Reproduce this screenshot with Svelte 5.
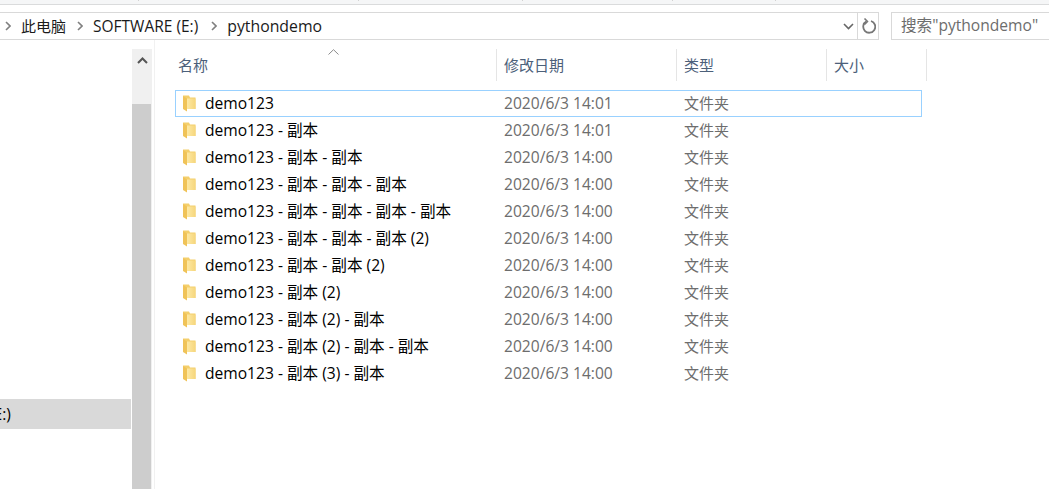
<script>
  const columns = [
    { label: '名称', width: 342 },
    { label: '修改日期', width: 180 },
    { label: '类型', width: 150 },
    { label: '大小', width: 100 }
  ];

  const files = [
    { name: 'demo123', date: '2020/6/3 14:01', focused: true },
    { name: 'demo123 - 副本', date: '2020/6/3 14:01' },
    { name: 'demo123 - 副本 - 副本', date: '2020/6/3 14:00' },
    { name: 'demo123 - 副本 - 副本 - 副本', date: '2020/6/3 14:00' },
    { name: 'demo123 - 副本 - 副本 - 副本 - 副本', date: '2020/6/3 14:00' },
    { name: 'demo123 - 副本 - 副本 - 副本 (2)', date: '2020/6/3 14:00' },
    { name: 'demo123 - 副本 - 副本 (2)', date: '2020/6/3 14:00' },
    { name: 'demo123 - 副本 (2)', date: '2020/6/3 14:00' },
    { name: 'demo123 - 副本 (2) - 副本', date: '2020/6/3 14:00' },
    { name: 'demo123 - 副本 (2) - 副本 - 副本', date: '2020/6/3 14:00' },
    { name: 'demo123 - 副本 (3) - 副本', date: '2020/6/3 14:00' }
  ];

  const crumbs = ['此电脑', 'SOFTWARE (E:)', 'pythondemo'];

  // ribbon group separators, only their feet are still visible
  const ribbonGroups = [139, 220, 164, 150, 103];
</script>

<div class="explorer">
  <div class="ribbon-edge">
    {#each ribbonGroups as w}
      <div class="ribbon-group" style="width: {w}px"></div>
    {/each}
  </div>

  <div class="toolbar">
    <div class="address">
      <div class="crumbs">
        {#each crumbs as crumb}
          <svg class="chevron" width="6" height="10" viewBox="0 0 6 10"><path d="M1 1 L5 5 L1 9" fill="none" stroke="#808080" stroke-width="1.6"/></svg>
          <span class="crumb">{crumb}</span>
        {/each}
      </div>
      <svg class="dropdown" width="11" height="7" viewBox="0 0 11 7"><path d="M1 1 L5.5 5.5 L10 1" fill="none" stroke="#666" stroke-width="1.6"/></svg>
      <div class="refresh">
        <svg width="15" height="16" viewBox="0 0 15 16"><path d="M5.5 3.4 A6 6 0 1 0 10 3" fill="none" stroke="#777" stroke-width="1.8"/><path d="M3.5 0.5 L6.5 3.5 L3.5 6.5" fill="none" stroke="#777" stroke-width="1.5"/></svg>
      </div>
    </div>
    <div class="search">搜索"pythondemo"</div>
  </div>

  <div class="body">
    <nav class="nav">
      <div class="nav-item"><span>SOFTWARE (E:)</span></div>
    </nav>

    <div class="scrollbar">
      <div class="scroll-btn">
        <svg width="11" height="7" viewBox="0 0 11 7"><path d="M1 6 L5.5 1.5 L10 6" fill="none" stroke="#555" stroke-width="2"/></svg>
      </div>
      <div class="scroll-thumb"></div>
    </div>

    <main class="content">
      <div class="sort-arrow">
        <svg width="11" height="6" viewBox="0 0 11 6"><path d="M0.5 5.5 L5.5 0.7 L10.5 5.5" fill="none" stroke="#8a8a8a"/></svg>
      </div>
      <div class="header">
        {#each columns as col}
          <div class="col-head" style="width: {col.width}px">{col.label}</div>
        {/each}
      </div>

      <div class="rows">
        {#each files as file}
          <div class="row" class:focused={file.focused}>
            <div class="cell name">
              <svg class="folder" width="13" height="17" viewBox="0 0 13 17">
                <defs>
                  <linearGradient id="fold" x1="0" x2="1" y1="0" y2="0">
                    <stop offset="0" stop-color="#fde9a4"/>
                    <stop offset="1" stop-color="#f6d67c"/>
                  </linearGradient>
                </defs>
                <path d="M0 0.5 H6 L7 2.5 H12.5 V14 H0 Z" fill="#f4cf6c"/>
                <path d="M4 3.5 H12.5 V14 H4 Z" fill="url(#fold)"/>
                <path d="M0 1 L4 3.5 V16.5 L0 14 Z" fill="#f0c358"/>
              </svg>
              <span>{file.name}</span>
            </div>
            <div class="cell date">{file.date}</div>
            <div class="cell type">文件夹</div>
          </div>
        {/each}
      </div>
    </main>
  </div>
</div>

<style>
  :global(body) {
    margin: 0;
    background: #fff;
  }

  .explorer {
    width: 1049px;
    height: 489px;
    overflow: hidden;
    display: flex;
    flex-direction: column;
    font-family: "Open Sans", "Noto Sans CJK SC", sans-serif;
    font-size: 15.6px;
    color: #000;
  }

  .ribbon-edge {
    height: 4px;
    display: flex;
    align-items: flex-start;
    background: #f5f6f7;
    border-bottom: 1px solid #dadbdc;
    flex: none;
  }

  .ribbon-group {
    height: 1px;
    box-sizing: border-box;
    flex: none;
    border-right: 1px solid #d2d2d2;
  }

  .toolbar {
    display: flex;
    height: 28px;
    margin-top: 7px;
    gap: 12px;
    flex: none;
  }

  .address {
    width: 879px;
    display: flex;
    align-items: center;
    border: 1px solid #d9d9d9;
    border-left: none;
    box-sizing: border-box;
  }

  .crumbs {
    flex: 1;
    display: flex;
    align-items: center;
    padding-left: 5px;
    line-height: 24px;
    height: 24px;
    margin-top: -1px;
  }

  .chevron {
    margin-right: 10px;
  }

  .crumb {
    margin-right: 11px;
    white-space: nowrap;
    color: #1a1a1a;
  }

  .crumb:nth-of-type(1) {
    font-size: 15px;
  }

  .crumb:nth-of-type(2) {
    font-size: 15.5px;
    margin-right: 13px;
  }

  .crumb:nth-of-type(3) {
    font-size: 15.8px;
  }

  .refresh {
    width: 20px;
    height: 100%;
    margin-left: 3px;
    border-left: 1px solid #d9d9d9;
    display: flex;
    align-items: center;
    justify-content: center;
  }

  .search {
    flex: 1;
    border: 1px solid #d9d9d9;
    border-right: none;
    padding-left: 9px;
    line-height: 25px;
    color: #6d6d6d;
    white-space: nowrap;
    overflow: hidden;
  }

  .body {
    flex: 1;
    display: flex;
    min-height: 0;
  }

  .nav {
    width: 131px;
    flex: none;
    padding-top: 359px;
    overflow: hidden;
  }

  .nav-item {
    height: 30px;
    line-height: 30px;
    background: #d9d9d9;
    white-space: nowrap;
  }

  .nav-item span {
    display: inline-block;
    margin-left: -95px;
  }

  .scrollbar {
    width: 20px;
    margin-left: 1px;
    margin-top: 9px;
    flex: none;
    display: flex;
    flex-direction: column;
    background: #f0f0f0;
  }

  .scroll-btn {
    flex: none;
    height: 55px;
    padding-top: 8px;
    box-sizing: border-box;
    display: flex;
    justify-content: center;
    align-items: flex-start;
  }

  .scroll-thumb {
    flex: 1;
    width: 19px;
    background: #cdcdcd;
  }

  .content {
    position: relative;
    flex: 1;
    margin-left: 2px;
    padding-top: 9px;
    border-left: 1px solid #f1f1f1;
    min-width: 0;
  }

  .sort-arrow {
    position: absolute;
    left: 173px;
    top: 9px;
    line-height: 0;
  }

  .header {
    display: flex;
    height: 32px;
  }

  .col-head {
    box-sizing: border-box;
    padding-left: 23px;
    font-size: 15px;
    line-height: 32px;
    color: #4c607a;
    border-right: 1px solid #e5e5e5;
  }

  .col-head:not(:first-child) {
    padding-left: 7px;
  }

  .rows {
    margin-top: 9px;
    margin-left: 20px;
    width: 747px;
  }

  .row {
    display: flex;
    height: 27px;
    align-items: center;
    box-sizing: border-box;
    white-space: nowrap;
  }

  .row.focused {
    border: 1px solid #99d1ff;
  }

  .cell {
    line-height: 25px;
  }

  .name {
    width: 329px;
    flex: none;
    display: flex;
    align-items: center;
    padding-left: 8px;
    box-sizing: border-box;
    gap: 9px;
  }

  .focused .name {
    width: 328px;
    padding-left: 7px;
  }

  .date {
    width: 180px;
    flex: none;
    color: #6d6d6d;
  }

  .type {
    font-size: 15px;
    color: #6d6d6d;
  }
</style>
